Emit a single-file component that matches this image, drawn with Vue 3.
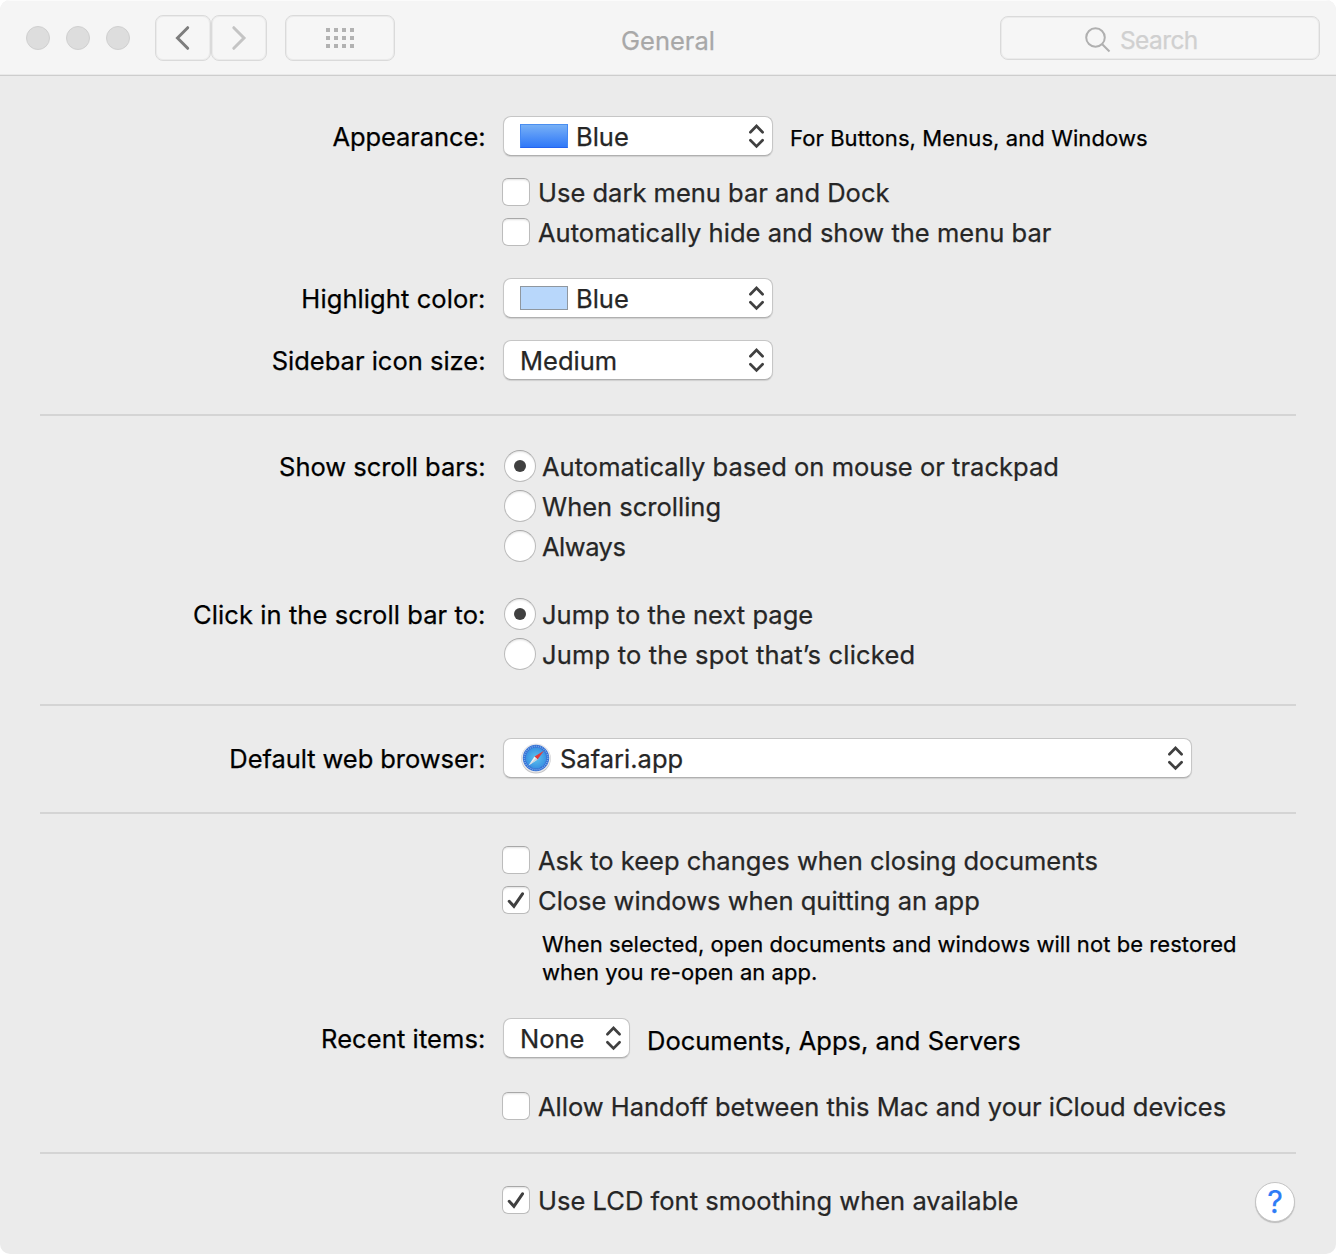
<template>
  <div class="window">
    <header class="toolbar">
      <div class="lights">
        <span v-for="n in 3" :key="n" class="light"></span>
      </div>
      <div class="nav">
        <button class="tool nav-btn">
          <svg width="56" height="46" viewBox="0 0 56 46">
            <path d="M32.700 12.700 22.500 23l10.200 10.300" stroke="#7d7d7d" />
          </svg>
        </button>
        <button class="tool nav-btn">
          <svg width="56" height="46" viewBox="0 0 56 46">
            <path d="M22.800 12.700 33 23 22.800 33.300" stroke="#c4c4c4" />
          </svg>
        </button>
      </div>
      <button class="tool grid-btn">
        <span v-for="n in 12" :key="n" class="dot"></span>
      </button>
      <h1 class="title">General</h1>
      <div class="tool search">
        <svg width="26" height="26" viewBox="0 0 26 26">
          <circle cx="10.500" cy="10.500" r="9.300" />
          <path d="M17.200 17.200 24.500 24.500" />
        </svg>
        <span class="placeholder">Search</span>
      </div>
    </header>

    <main class="content">
      <template v-for="(row, i) in rows" :key="i">
        <hr v-if="row.type === 'divider'" class="divider" :class="row.space" />
        <div v-else class="row" :class="row.space">
          <div class="label">
            <span v-if="row.label" :style="spacing(row.labelSpacing)">{{ row.label }}</span>
          </div>

          <div v-if="row.type === 'popup'" class="control">
            <div class="popup" :class="row.size">
              <span v-if="row.swatch" class="swatch" :class="row.swatch"></span>
              <svg v-if="row.safari" class="safari" width="32" height="32" viewBox="0 0 32 32">
                <defs>
                  <radialGradient id="glow">
                    <stop offset="0" stop-color="#5cc4ee" />
                    <stop offset="1" stop-color="#3a92e2" />
                  </radialGradient>
                </defs>
                <circle cx="16" cy="16.800" r="14.800" fill="#c4c4c6" />
                <circle cx="16" cy="16" r="14.600" fill="#e9e9eb" />
                <circle cx="16" cy="16" r="13.200" fill="#3570d4" />
                <circle cx="16" cy="16" r="11.700" fill="none" stroke="#7fb0ec" stroke-width="1.600" stroke-dasharray=".9 1.200" />
                <circle cx="16" cy="16" r="10.400" fill="url(#glow)" />
                <path d="M24 8.800 14.500 14.400 17.500 17.600z" fill="#e33a3a" />
                <path d="M8.500 23.600 14.500 14.400 17.500 17.600z" fill="#f2f2f2" />
                <path d="M8.500 23.600 16 16l1.500 1.600z" fill="#c9d3dc" />
              </svg>
              <span class="value">{{ row.value }}</span>
              <svg class="arrows" width="18" height="26" viewBox="0 0 18 26">
                <path d="M2.400 9.200 8.500 3 14.600 9.200M2.400 17.200 8.500 23.400 14.600 17.200" />
              </svg>
            </div>
            <span v-if="row.note" class="note" :class="row.noteSize">{{ row.note }}</span>
          </div>

          <label v-else class="control choice" :class="row.type">
            <span class="mark">
              <svg v-if="row.type === 'check' && row.on" width="28" height="28" viewBox="0 0 28 28">
                <path d="M7.200 15.300 11.900 20.300 20.500 7.800" />
              </svg>
              <span v-if="row.type === 'radio' && row.on" class="bullet"></span>
            </span>
            <span class="text" :style="spacing(row.textSpacing)">{{ row.text }}</span>
          </label>

          <button v-if="row.help" class="help">?</button>
        </div>
        <p v-if="row.hint" class="hint">
          <span v-for="line in row.hint" :key="line">{{ line }}</span>
        </p>
      </template>
    </main>
  </div>
</template>

<script setup>
const rows = [
  { type: 'popup', label: 'Appearance:', labelSpacing: -0.1, value: 'Blue', swatch: 'deep', size: 'medium', note: 'For Buttons, Menus, and Windows', noteSize: 'small' },
  { type: 'check', text: 'Use dark menu bar and Dock', space: 'space-16' },
  { type: 'check', text: 'Automatically hide and show the menu bar', textSpacing: 0.02 },
  { type: 'popup', label: 'Highlight color:', labelSpacing: 0.09, value: 'Blue', swatch: 'pale', size: 'medium', space: 'space-26' },
  { type: 'popup', label: 'Sidebar icon size:', value: 'Medium', size: 'medium', space: 'space-22' },
  { type: 'divider', space: 'space-34' },
  { type: 'radio', label: 'Show scroll bars:', labelSpacing: -0.03, text: 'Automatically based on mouse or trackpad', textSpacing: 0.02, on: true, space: 'space-30' },
  { type: 'radio', text: 'When scrolling' },
  { type: 'radio', text: 'Always', textSpacing: -0.5 },
  { type: 'radio', label: 'Click in the scroll bar to:', labelSpacing: 0.08, text: 'Jump to the next page', textSpacing: 0.02, on: true, space: 'space-28' },
  { type: 'radio', text: 'Jump to the spot that’s clicked', textSpacing: 0.19 },
  { type: 'divider', space: 'space-30' },
  { type: 'popup', label: 'Default web browser:', labelSpacing: -0.07, value: 'Safari.app', safari: true, size: 'large', space: 'space-32' },
  { type: 'divider', space: 'space-34' },
  { type: 'check', text: 'Ask to keep changes when closing documents', space: 'space-26' },
  {
    type: 'check',
    text: 'Close windows when quitting an app',
    on: true,
    hint: ['When selected, open documents and windows will not be restored', 'when you re-open an app.'],
  },
  { type: 'popup', label: 'Recent items:', labelSpacing: 0.1, value: 'None', size: 'mini', note: 'Documents, Apps, and Servers', noteSize: 'regular', space: 'space-32' },
  { type: 'check', text: 'Allow Handoff between this Mac and your iCloud devices', textSpacing: -0.01, space: 'space-28' },
  { type: 'divider', space: 'space-26' },
  { type: 'check', text: 'Use LCD font smoothing when available', textSpacing: 0.02, on: true, help: true, space: 'space-26' },
]

function spacing(value) {
  return value ? { letterSpacing: value + 'px' } : null
}
</script>

<style>
body {
  background: #fff;
}
</style>

<style scoped>
* {
  box-sizing: border-box;
}

.window {
  width: 1336px;
  height: 1254px;
  background: #ebebeb;
  border-radius: 10px;
  overflow: hidden;
  font-family: Inter, Roboto, "Liberation Sans", sans-serif;
  font-size: 25.5px;
  line-height: 40px;
  color: #000;
  white-space: nowrap;
  -webkit-text-stroke: 0.25px;
}

button {
  padding: 0;
  font: inherit;
}

.toolbar {
  display: flex;
  height: 76px;
  padding: 14px 16px 0 26px;
  background: #f5f5f5;
  border-top: 1px solid #fbfbfb;
  border-bottom: 1px solid #cdcdcd;
  box-shadow: inset 0 -1px #e9e9e9;
}

.lights {
  display: flex;
  gap: 16px;
  margin-top: 11px;
}

.light {
  width: 24px;
  height: 24px;
  border: 1px solid #d0d0d0;
  border-radius: 50%;
  background: #dddddd;
}

.tool {
  height: 46px;
  border: 1px solid #dadada;
  border-radius: 8px;
  background: #f6f6f6;
  box-shadow: inset 0 0 0 1px #ebebeb;
}

.nav {
  display: flex;
  margin-left: 25px;
}

.nav-btn {
  display: flex;
  align-items: center;
  justify-content: center;
  width: 56px;
}

.nav-btn svg {
  flex: none;
  fill: none;
  stroke-width: 3;
  stroke-linecap: round;
}

.grid-btn {
  display: grid;
  grid-template-columns: repeat(4, 4px);
  grid-auto-rows: 4px;
  gap: 4px;
  place-content: center;
  width: 110px;
  margin-left: 18px;
}

.dot {
  background: #b2b2b2;
}

.title {
  flex: 1;
  margin: 6px 0 0;
  padding-right: 59px;
  font-size: 25.5px;
  font-weight: 400;
  text-align: center;
  color: #a8a8a8;
}

.search {
  display: flex;
  align-items: center;
  width: 320px;
  height: 44px;
  margin-top: 1px;
  padding: 3px 0 0 84px;
  color: #d0d0d0;
}

.search svg {
  margin-right: 9px;
  fill: none;
  stroke: #b0b0b0;
  stroke-width: 2;
}

.placeholder {
  font-size: 24.5px;
  letter-spacing: -0.6px;
}

.content {
  display: flex;
  flex-direction: column;
  padding: 40px 40px 0;
}

.row {
  display: flex;
  height: 40px;
}

.divider {
  width: 100%;
  height: 2px;
  margin: 0;
  border: 0;
  background: #d4d4d4;
}

.space-16 {
  margin-top: 16px;
}

.space-22 {
  margin-top: 22px;
}

.space-26 {
  margin-top: 26px;
}

.space-28 {
  margin-top: 28px;
}

.space-30 {
  margin-top: 30px;
}

.space-32 {
  margin-top: 32px;
}

.space-34 {
  margin-top: 34px;
}

.label {
  width: 445.5px;
  padding-top: 1px;
  text-align: right;
}

.control {
  display: flex;
  margin-left: 17.5px;
  color: #262626;
}

.popup {
  display: flex;
  align-items: center;
  height: 40px;
  padding: 0 6px 0 16px;
  border: 1px solid #c6c6c6;
  border-bottom-color: #b0b0b0;
  border-radius: 8px;
  background: #fff;
  box-shadow: 0 1px 1px rgba(0, 0, 0, 0.12);
}

.popup.medium {
  width: 270px;
}

.popup.large {
  width: 689px;
}

.popup.mini {
  width: 127px;
}

.value {
  padding-top: 2px;
}

.arrows {
  margin-left: auto;
  fill: none;
  stroke: #404040;
  stroke-width: 2.7;
  stroke-linecap: round;
  stroke-linejoin: miter;
}

.swatch {
  width: 48px;
  height: 24px;
  margin-right: 8px;
  border: 1px solid #8f979f;
  background: #b8d7fb;
}

.swatch.deep {
  border-color: #4b8ff0 #4488f3 #2563f0;
  background: linear-gradient(#77b0f6, #2f78f8);
}

.safari {
  margin-right: 8px;
}

.note {
  margin-left: 17px;
  color: #000;
}

.note.small {
  padding-top: 2px;
  font-size: 22px;
  letter-spacing: 0.09px;
}

.note.regular {
  padding-top: 3px;
}

.choice {
  align-items: center;
}

.mark {
  display: flex;
  align-items: center;
  justify-content: center;
  width: 28px;
  height: 28px;
  margin-left: -1px;
  margin-right: 8px;
  border: 1px solid #bcbcbc;
  border-top-color: #a8a8a8;
  border-radius: 6px;
  background: #fff;
  box-shadow: inset 0 2px 2px -1px rgba(0, 0, 0, 0.12);
}

.mark svg {
  flex: none;
  fill: none;
  stroke: #404040;
  stroke-width: 3;
  stroke-linecap: round;
}

.radio .mark {
  width: 32px;
  height: 32px;
  margin-left: 1px;
  margin-right: 6px;
  border-radius: 50%;
}

.bullet {
  width: 12px;
  height: 12px;
  border-radius: 50%;
  background: #404040;
}

.text {
  padding-top: 2px;
}

.hint {
  display: flex;
  flex-direction: column;
  margin: 10px 0 0 502px;
  font-size: 22px;
  line-height: 28px;
  letter-spacing: 0.06px;
}

.help {
  width: 40px;
  height: 40px;
  margin: 2px 1px 0 auto;
  border: 1px solid #c4c4c4;
  border-radius: 50%;
  background: #fff;
  box-shadow: 0 1px 1px rgba(0, 0, 0, 0.2);
  color: #2e7cf6;
  font-size: 30.5px;
  line-height: 38px;
  text-align: center;
}
</style>
